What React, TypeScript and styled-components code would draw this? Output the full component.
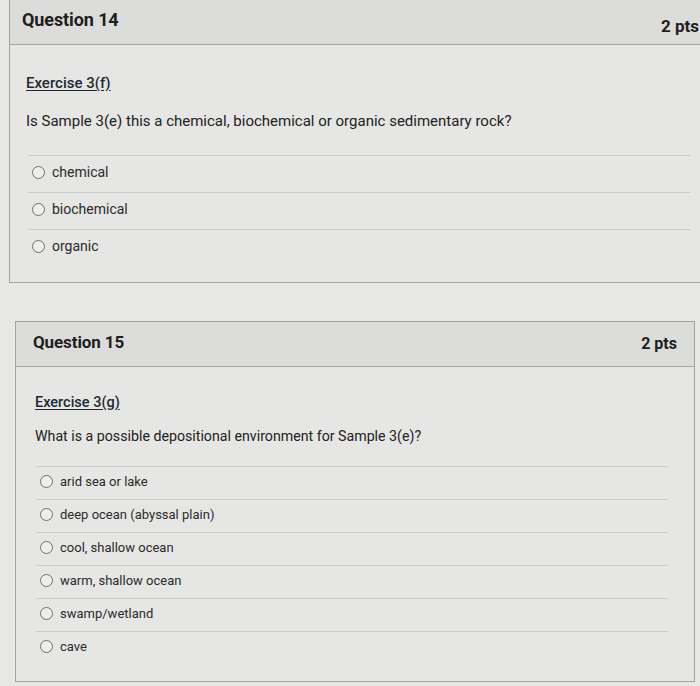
import styled, { createGlobalStyle } from 'styled-components';

const GlobalStyle = createGlobalStyle`
  html, body {
    margin: 0;
    padding: 0;
    background: #e7e7e5;
    overflow: hidden;
  }
  body {
    font-family: Roboto, "Liberation Sans", Arial, sans-serif;
    color: #222;
  }
`;

interface QuestionData {
  number: number;
  points: number;
  exercise: string;
  text: string;
  answers: string[];
}

const questions: QuestionData[] = [
  {
    number: 14,
    points: 2,
    exercise: 'Exercise 3(f)',
    text: 'Is Sample 3(e) this a chemical, biochemical or organic sedimentary rock?',
    answers: ['chemical', 'biochemical', 'organic'],
  },
  {
    number: 15,
    points: 2,
    exercise: 'Exercise 3(g)',
    text: 'What is a possible depositional environment for Sample 3(e)?',
    answers: [
      'arid sea or lake',
      'deep ocean (abyssal plain)',
      'cool, shallow ocean',
      'warm, shallow ocean',
      'swamp/wetland',
      'cave',
    ],
  },
];

const Page = styled.div`
  display: flex;
  flex-direction: column;
  gap: 38px;
  width: 700px;
  height: 686px;
  overflow: hidden;
`;

const Card = styled.div<{ $first?: boolean }>`
  display: flex;
  flex-direction: column;
  flex-shrink: 0;
  margin-top: ${(p) => (p.$first ? '-1px' : '0')};
  margin-left: ${(p) => (p.$first ? '9px' : '15px')};
  width: ${(p) => (p.$first ? '706px' : '678px')};
  border: 1px solid #a3a3a1;
  background: #e6e6e4;
`;

const Header = styled.div<{ $first?: boolean }>`
  display: flex;
  align-items: center;
  justify-content: space-between;
  height: 39px;
  padding: ${(p) => (p.$first ? '0 17px 5px 12px' : '0 17px 5px 17px')};
  background: #dcdcda;
  border-bottom: 1px solid #a6a6a4;
`;

const Title = styled.div<{ $first?: boolean }>`
  font-size: ${(p) => (p.$first ? '18px' : '17px')};
  font-weight: 700;
  color: #1e1e1e;
  letter-spacing: -0.1px;
`;

const Points = styled.div<{ $first?: boolean }>`
  font-size: ${(p) => (p.$first ? '17px' : '16px')};
  font-weight: 700;
  color: #1e1e1e;
  margin-top: ${(p) => (p.$first ? '12px' : '4px')};
`;

const Body = styled.div<{ $first?: boolean }>`
  display: flex;
  flex-direction: column;
  padding: ${(p) =>
    p.$first ? '28px 26px 16px 16px' : '26px 26px 17px 19px'};
`;

const Exercise = styled.a<{ $first?: boolean }>`
  align-self: flex-start;
  font-size: ${(p) => (p.$first ? '15px' : '14.5px')};
  line-height: 20px;
  font-weight: 500;
  color: #232a33;
  text-decoration: underline;
  text-underline-offset: 2px;
`;

const Prompt = styled.div<{ $first?: boolean }>`
  margin-top: ${(p) => (p.$first ? '18px' : '13px')};
  font-size: ${(p) => (p.$first ? '15px' : '14.2px')};
  line-height: 20px;
  color: #222;
`;

const AnswerList = styled.div<{ $first?: boolean }>`
  display: flex;
  flex-direction: column;
  margin-top: ${(p) => (p.$first ? '24px' : '20px')};
  padding-left: ${(p) => (p.$first ? '2px' : '1px')};
`;

const AnswerRow = styled.label<{ $first?: boolean }>`
  display: flex;
  align-items: center;
  gap: 7px;
  height: 28px;
  padding: ${(p) => (p.$first ? '2px 0 6px 4px' : '0 0 4px 4px')};
  border-top: 1px solid #cacac8;
  font-size: ${(p) => (p.$first ? '14px' : '13px')};
  color: #2b2b2b;
`;

const Radio = styled.span`
  display: inline-block;
  width: 11px;
  height: 11px;
  border: 1.4px solid #6f6f6f;
  border-radius: 50%;
  background: #eeeeec;
  flex-shrink: 0;
`;

const Question = ({ q, first }: { q: QuestionData; first?: boolean }) => (
  <Card $first={first}>
    <Header $first={first}>
      <Title $first={first}>Question {q.number}</Title>
      <Points $first={first}>{q.points} pts</Points>
    </Header>
    <Body $first={first}>
      <Exercise $first={first}>{q.exercise}</Exercise>
      <Prompt $first={first}>{q.text}</Prompt>
      <AnswerList $first={first}>
        {q.answers.map((a) => (
          <AnswerRow key={a} $first={first}>
            <Radio />
            {a}
          </AnswerRow>
        ))}
      </AnswerList>
    </Body>
  </Card>
);

export default function App() {
  return (
    <>
      <GlobalStyle />
      <Page>
        <Question q={questions[0]} first />
        <Question q={questions[1]} />
      </Page>
    </>
  );
}
